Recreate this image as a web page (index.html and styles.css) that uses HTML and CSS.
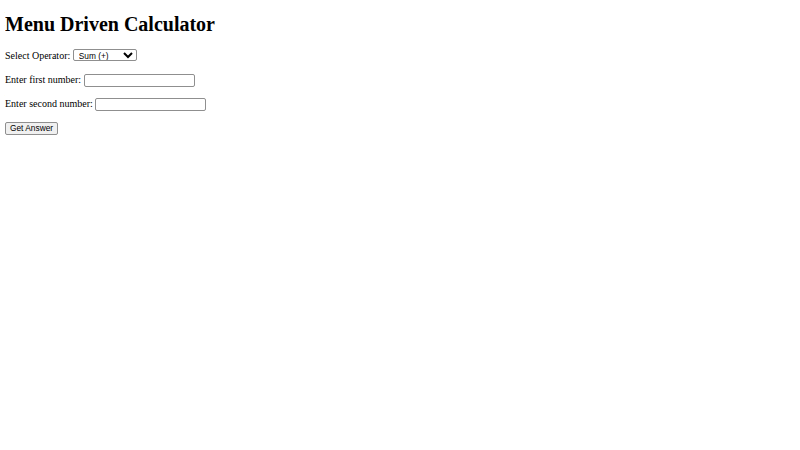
FILE: index.html
```html
<!DOCTYPE html>
<html>
<head>
<meta charset="utf-8">
<title>Menu Driven Calculator</title>
<link rel="stylesheet" href="styles.css">
</head>
<body class="page">
<h1 class="title">Menu Driven Calculator</h1>
<p class="row">Select Operator: <select class="op">
<option>Sum (+)</option>
<option>Difference (-)</option>
<option>Product (*)</option>
<option>Quotient (/)</option>
</select></p>
<p class="row">Enter first number: <input class="num" type="text"></p>
<p class="row">Enter second number: <input class="num" type="text"></p>
<button class="btn">Get Answer</button>
</body>
</html>
```
FILE: styles.css
```css
.page {
  margin: 5px;
  font-family: "Liberation Serif", "Times New Roman", serif;
  font-size: 10px;
  color: #000;
  background: #fff;
}
.title {
  font-size: 20px;
  font-weight: bold;
  margin: 8px 0 13.4px;
  line-height: 23px;
}
.row {
  margin: 10px 0;
  line-height: 14px;
}
.op {
  font-family: "Liberation Sans", Arial, sans-serif;
  font-size: 8.33px;
  width: 64px;
  height: 12px;
  padding: 0 1px;
  border: 1px solid #8f8f8f;
  border-radius: 2px;
  background: #fff;
  color: #000;
  vertical-align: baseline;
}
.num {
  font-family: "Liberation Sans", Arial, sans-serif;
  font-size: 8.33px;
  width: 107px;
  height: 9px;
  padding: 1px 1px;
  border: 1px solid #8f8f8f;
  border-radius: 2px;
  margin: 0;
}
.btn {
  font-family: "Liberation Sans", Arial, sans-serif;
  font-size: 8.33px;
  padding: 1px 4px;
  height: 13px;
  line-height: 9px;
  border: 1px solid #8f8f8f;
  border-radius: 2px;
  background: #f0f0f0;
  color: #000;
  margin-top: 1px;
}
```
